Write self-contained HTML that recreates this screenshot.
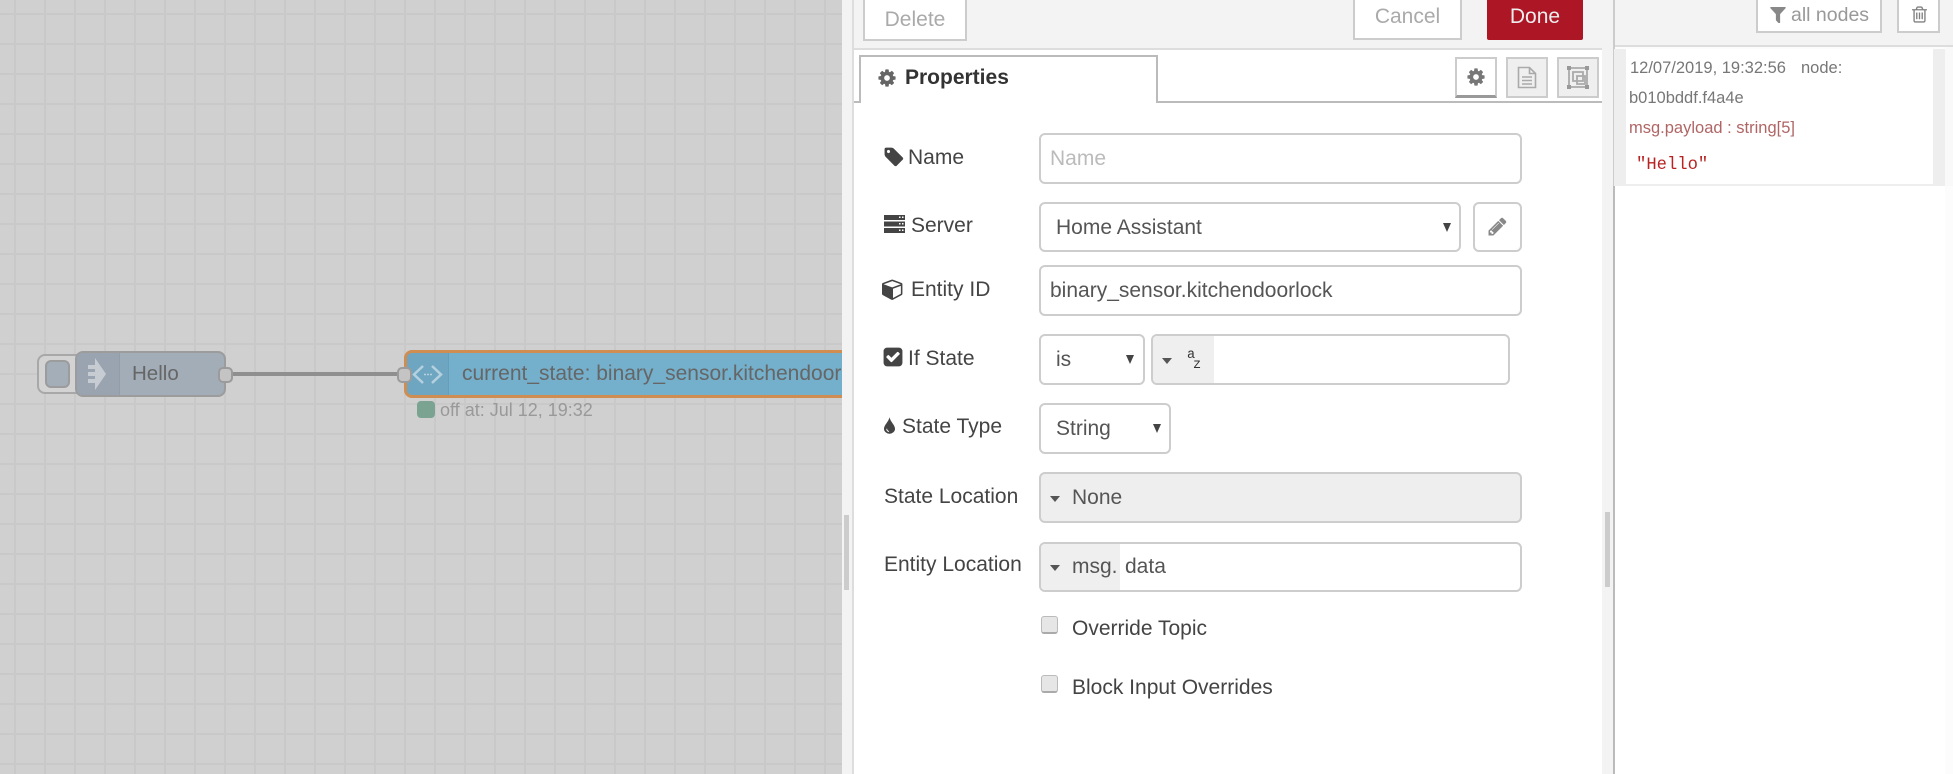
<!DOCTYPE html>
<html><head><meta charset="utf-8"><style>
*{box-sizing:border-box}
html,body{margin:0;padding:0}
body{width:1953px;height:774px;overflow:hidden;position:relative;background:#fff;font-family:"Liberation Sans",Arial,sans-serif;color:#555}
.a{position:absolute}
.t{position:absolute;white-space:nowrap;line-height:30px;height:30px}
.l{font-size:21px;color:#444}
.in{position:absolute;background:#fff;border:2px solid #cdcdcd;border-radius:6px}
.btn{position:absolute;background:#fff;border:2px solid #ccc;border-top-width:0}
svg{position:absolute;display:block}
.car{position:absolute;width:0;height:0;border-left:5.500px solid transparent;border-right:5.500px solid transparent;border-top:6px solid #555}
.sc{position:absolute;width:0;height:0;border-left:4.500px solid transparent;border-right:4.500px solid transparent;border-top:9px solid #444}
.cb{position:absolute;width:17px;height:18px;background:#e6e6e6;border:1px solid #bbb;border-bottom:2px solid #aaa;border-radius:3px}
.f{font-size:21px;color:#555}
</style></head><body>

<!-- canvas -->
<div class="a" style="left:0;top:0;width:842px;height:774px;background-color:#d0d0d0;background-image:linear-gradient(to right,#c9c9c9 2px,transparent 2px),linear-gradient(to bottom,#c9c9c9 2px,transparent 2px);background-size:30px 30px;background-position:14px 13px;overflow:hidden">
  <div class="a" style="left:37px;top:354px;width:50px;height:40px;background:#d3d3d3;border:2px solid #a8a8a8;border-radius:8px"></div>
  <div class="a" style="left:45px;top:360px;width:25px;height:28px;background:#a3aeb9;border:2px solid #9c9c9c;border-radius:6px"></div>
  <div class="a" style="left:75px;top:351px;width:151px;height:46px;background:#a2adb8;border:2px solid #9c9c9c;border-radius:8px"></div>
  <div class="a" style="left:77px;top:353px;width:43px;height:42px;background:#99a4b0;border-right:1px solid #929da9;border-radius:6px 0 0 6px"></div>
  <svg style="left:85px;top:356px" width="26" height="36" viewBox="0 0 26 36"><path d="M3 9h7V2l11 16-11 16v-7H3v-4h7v-3H3v-4h7v-3H3z" fill="#c6ccd2"/></svg>
  <div class="t" style="left:132px;top:359px;font-size:20.500px;color:#666">Hello</div>
  <div class="a" style="left:232px;top:372px;width:166px;height:4px;background:#8f8f8f"></div>
  <div class="a" style="left:218px;top:367px;width:15px;height:16px;background:#c4c4c4;border:2px solid #9b9b9b;border-radius:5px"></div>
  <div class="a" style="left:404px;top:350px;width:480px;height:48px;background:#74afcb;border:3px solid #cf8d52;border-radius:8px"></div>
  <div class="a" style="left:407px;top:353px;width:42px;height:42px;background:#6ea6c1;border-right:1px solid #689db8;border-radius:5px 0 0 5px"></div>
  <svg style="left:412px;top:360px" width="32" height="28" viewBox="0 0 32 28"><path d="M11 6L2 14.500 11 23M20 6l9 8.500L20 23" fill="none" stroke="#b5d1df" stroke-width="2.500"/><path d="M12 14.500h2M15 14.500h2M18 14.500h2" stroke="#b5d1df" stroke-width="1.500"/></svg>
  <div class="t" style="left:462px;top:359px;font-size:21px;color:#666">current_state: binary_sensor.kitchendoor</div>
  <div class="a" style="left:397px;top:367px;width:15px;height:16px;background:#c4c4c4;border:2px solid #9b9b9b;border-radius:5px"></div>
  <div class="a" style="left:417px;top:401px;width:18px;height:17px;background:#7aa392;border-radius:4px"></div>
  <div class="t" style="left:440px;top:395px;font-size:18px;color:#999">off at: Jul 12, 19:32</div>
</div>

<!-- editor tray -->
<div class="a" style="left:842px;top:0;width:771px;height:774px;background:#f3f3f3"></div>
<div class="a" style="left:844px;top:515px;width:5px;height:75px;background:#ccc"></div>
<div class="a" style="left:852px;top:0;width:2px;height:774px;background:#ddd"></div>
<div class="a" style="left:854px;top:48px;width:748px;height:726px;background:#fff;border-top:2px solid #ddd"></div>

<div class="btn" style="left:863px;top:0;width:104px;height:41px"></div>
<div class="t" style="left:863px;width:104px;text-align:center;top:5px;font-size:21px;color:#aaa">Delete</div>
<div class="btn" style="left:1353px;top:0;width:109px;height:40px"></div>
<div class="t" style="left:1353px;width:109px;text-align:center;top:2px;font-size:21px;color:#aaa">Cancel</div>
<div class="a" style="left:1487px;top:0;width:96px;height:40px;background:#ad1625;border-radius:0 0 2px 2px"></div>
<div class="t" style="left:1487px;width:96px;text-align:center;top:2px;font-size:21px;color:#eee">Done</div>

<!-- tabs -->
<div class="a" style="left:854px;top:101px;width:748px;height:2px;background:#bbb"></div>
<div class="a" style="left:859px;top:55px;width:299px;height:48px;background:#fff;border:2px solid #bbb;border-bottom:0"></div>
<svg style="left:877px;top:68px" width="20" height="20" viewBox="0 0 1792 1792"><path fill="#666" d="M1152 896q0-106-75-181t-181-75-181 75-75 181 75 181 181 75 181-75 75-181zm512-109v222q0 12-8 23t-20 13l-185 28q-19 54-39 91 35 50 107 138 10 12 10 25t-9 23q-27 37-99 108t-94 71q-12 0-26-9l-138-108q-44 23-91 38-16 136-29 186-7 28-36 28h-222q-14 0-24.500-8.500t-11.500-21.500l-28-184q-49-16-90-37l-141 107q-10 9-25 9-14 0-25-11-126-114-165-168-7-10-7-23 0-12 8-23 15-21 51-66.500t54-70.500q-27-50-41-99l-183-27q-13-2-21-12.500t-8-23.500v-222q0-12 8-23t19-13l186-28q14-46 39-92-40-57-107-138-10-12-10-24 0-10 9-23 26-36 98.500-107.500t94.500-71.500q13 0 26 10l138 107q44-23 91-38 16-136 29-186 7-28 36-28h222q14 0 24.500 8.500t11.500 21.500l28 184q49 16 90 37l142-107q9-9 24-9 13 0 25 10 129 119 165 170 7 8 7 22 0 12-8 23-15 21-51 66.500t-54 70.500q26 50 41 98l183 28q13 2 21 12.500t8 23.500z"/></svg>
<div class="t" style="left:905px;top:63px;font-size:21px;font-weight:bold;color:#333">Properties</div>

<div class="a" style="left:1455px;top:57px;width:42px;height:41px;background:#fff;border:2px solid #ccc;border-bottom:3px solid #999"></div>
<svg style="left:1466px;top:67px" width="20" height="20" viewBox="0 0 1792 1792"><path fill="#777" d="M1152 896q0-106-75-181t-181-75-181 75-75 181 75 181 181 75 181-75 75-181zm512-109v222q0 12-8 23t-20 13l-185 28q-19 54-39 91 35 50 107 138 10 12 10 25t-9 23q-27 37-99 108t-94 71q-12 0-26-9l-138-108q-44 23-91 38-16 136-29 186-7 28-36 28h-222q-14 0-24.500-8.500t-11.500-21.500l-28-184q-49-16-90-37l-141 107q-10 9-25 9-14 0-25-11-126-114-165-168-7-10-7-23 0-12 8-23 15-21 51-66.500t54-70.500q-27-50-41-99l-183-27q-13-2-21-12.500t-8-23.500v-222q0-12 8-23t19-13l186-28q14-46 39-92-40-57-107-138-10-12-10-24 0-10 9-23 26-36 98.500-107.500t94.500-71.500q13 0 26 10l138 107q44-23 91-38 16-136 29-186 7-28 36-28h222q14 0 24.500 8.500t11.500 21.500l28 184q49 16 90 37l142-107q9-9 24-9 13 0 25 10 129 119 165 170 7 8 7 22 0 12-8 23-15 21-51 66.500t-54 70.500q26 50 41 98l183 28q13 2 21 12.500t8 23.500z"/></svg>
<div class="a" style="left:1506px;top:57px;width:42px;height:41px;background:#efefef;border:2px solid #ccc"></div>
<svg style="left:1517px;top:66px" width="20" height="23" viewBox="0 0 20 23"><path d="M1.500 1.500h11l6 6v14h-17zM12.500 1.500v6h6M5 11h10M5 14.500h10M5 18h10" fill="none" stroke="#aaa" stroke-width="1.600"/></svg>
<div class="a" style="left:1557px;top:57px;width:42px;height:41px;background:#efefef;border:2px solid #ccc"></div>
<svg style="left:1567px;top:66px" width="22" height="23" viewBox="0 0 22 23"><path d="M2 2h18v19H2zM6 6h10v9H6zM10 10h8v8h-8z" fill="none" stroke="#aaa" stroke-width="1.800"/><path d="M0 0h4v4H0zM18 0h4v4h-4zM0 19h4v4H0zM18 19h4v4h-4z" fill="#999"/></svg>

<!-- form -->
<svg style="left:883px;top:146px" width="22" height="22" viewBox="0 0 1792 1792"><path fill="#444" d="M576 448q0-53-37.500-90.500t-90.500-37.500-90.500 37.500-37.500 90.500 37.500 90.500 90.500 37.500 90.500-37.500 37.500-90.500zm1067 576q0 53-37 90l-491 492q-39 37-91 37-53 0-90-37l-715-716q-38-37-64.500-101t-26.500-117v-416q0-52 38-90t90-38h416q53 0 117 26.500t102 64.500l715 714q37 39 37 91z"/></svg>
<div class="t l" style="left:908px;top:143px">Name</div>
<div class="in" style="left:1039px;top:133px;width:483px;height:51px"></div>
<div class="t" style="left:1050px;top:144px;font-size:21px;color:#bbb">Name</div>

<svg style="left:884px;top:215px" width="21" height="18" viewBox="0 0 21 18"><path fill="#444" d="M0 0h21v5H0zM0 6.500h21v5H0zM0 13h21v5H0z"/><path fill="#fff" d="M15 1.500h1.500V3H15zM18 1.500h1.500V3H18zM15 8h1.500v1.500H15zM18 8h1.500v1.500H18zM15 14.500h1.500V16H15zM18 14.500h1.500V16H18z"/></svg>
<div class="t l" style="left:911px;top:211px">Server</div>
<div class="in" style="left:1039px;top:202px;width:422px;height:50px"></div>
<div class="t f" style="left:1056px;top:213px">Home Assistant</div>
<div class="sc" style="left:1443px;top:223px"></div>
<div class="in" style="left:1473px;top:202px;width:49px;height:50px"></div>
<svg style="left:1487px;top:216px" width="21" height="21" viewBox="0 0 1792 1792"><path fill="#888" d="M491 1536l91-91-235-235-91 91v107h128v128h107zm523-928q0-22-22-22-10 0-17 7l-542 542q-7 7-7 17 0 22 22 22 10 0 17-7l542-542q7-7 7-17zm-54-192l416 416-832 832h-416v-416zm683 96q0 53-37 90l-166 166-416-416 166-165q36-38 90-38 53 0 91 38l235 234q37 39 37 91z"/></svg>

<svg style="left:882px;top:278px" width="22" height="22" viewBox="0 0 1792 1792"><path fill="#444" d="M896 1629l640-349v-636l-640 233v752zm-64-865l698-254-698-254-698 254zm832-252v768q0 35-18 65t-49 47l-704 384q-28 16-61 16t-61-16l-704-384q-31-17-49-47t-18-65v-768q0-40 23-73t61-47l704-256q22-8 44-8t44 8l704 256q38 14 61 47t23 73z"/></svg>
<div class="t l" style="left:911px;top:275px">Entity ID</div>
<div class="in" style="left:1039px;top:265px;width:483px;height:51px"></div>
<div class="t f" style="left:1050px;top:276px">binary_sensor.kitchendoorlock</div>

<svg style="left:882px;top:346px" width="22" height="22" viewBox="0 0 1792 1792"><path fill="#444" d="M813 1299l614-614q19-19 19-45t-19-45l-102-102q-19-19-45-19t-45 19l-467 467-211-211q-19-19-45-19t-45 19l-102 102q-19 19-19 45t19 45l358 358q19 19 45 19t45-19zm851-883v960q0 119-84.500 203.500t-203.500 84.500h-960q-119 0-203.500-84.500t-84.500-203.500v-960q0-119 84.500-203.500t203.500-84.500h960q119 0 203.500 84.500t84.500 203.500z"/></svg>
<div class="t l" style="left:908px;top:344px">If State</div>
<div class="in" style="left:1039px;top:334px;width:106px;height:51px"></div>
<div class="t f" style="left:1056px;top:345px">is</div>
<div class="sc" style="left:1126px;top:355px"></div>
<div class="in" style="left:1151px;top:334px;width:359px;height:51px;overflow:hidden"><div class="a" style="left:0;top:0;width:61px;height:47px;background:#efefef"></div></div>
<div class="car" style="left:1162px;top:358px"></div>
<div class="t" style="left:1187px;top:348px;font-size:13.500px;font-family:'Liberation Mono',monospace;color:#333;line-height:16px;height:16px">a</div>
<div class="t" style="left:1193px;top:358px;font-size:13.500px;font-family:'Liberation Mono',monospace;color:#333;line-height:16px;height:16px">z</div>

<svg style="left:884px;top:417px" width="11" height="17" viewBox="0 0 12 18"><path fill="#444" d="M6 0C7 5 12 8.500 12 12.500a6 5.500 0 0 1-12 0C0 8.500 5 5 6 0z"/><path d="M3 12.500a3 3 0 0 0 2.500 3" fill="none" stroke="#fff" stroke-width="1"/></svg>
<div class="t l" style="left:902px;top:412px">State Type</div>
<div class="in" style="left:1039px;top:403px;width:132px;height:51px"></div>
<div class="t f" style="left:1056px;top:414px">String</div>
<div class="sc" style="left:1153px;top:424px"></div>

<div class="t l" style="left:884px;top:482px">State Location</div>
<div class="in" style="left:1039px;top:472px;width:483px;height:51px;background:#eee"></div>
<div class="car" style="left:1050px;top:496px"></div>
<div class="t f" style="left:1072px;top:483px">None</div>

<div class="t l" style="left:884px;top:550px">Entity Location</div>
<div class="in" style="left:1039px;top:542px;width:483px;height:50px;overflow:hidden"><div class="a" style="left:0;top:0;width:79px;height:46px;background:#efefef"></div></div>
<div class="car" style="left:1050px;top:565px"></div>
<div class="t f" style="left:1072px;top:552px">msg.</div>
<div class="t f" style="left:1125px;top:552px">data</div>

<div class="cb" style="left:1041px;top:616px"></div>
<div class="t l" style="left:1072px;top:614px">Override Topic</div>
<div class="cb" style="left:1041px;top:675px"></div>
<div class="t l" style="left:1072px;top:673px">Block Input Overrides</div>

<!-- debug sidebar -->
<div class="a" style="left:1602px;top:0;width:11px;height:774px;background:#f3f3f3"></div>
<div class="a" style="left:1605px;top:512px;width:5px;height:75px;background:#ccc"></div>
<div class="a" style="left:1613px;top:0;width:340px;height:774px;background:#fcfcfc"></div>
<div class="a" style="left:1613px;top:0;width:2px;height:186px;background:#ccc"></div>
<div class="a" style="left:1613px;top:186px;width:2px;height:588px;background:#bbb"></div>
<div class="a" style="left:1615px;top:0;width:338px;height:45px;background:#f3f3f3"></div>
<div class="a" style="left:1615px;top:45px;width:338px;height:2px;background:#ddd"></div>
<div class="a" style="left:1945px;top:47px;width:8px;height:139px;background:#f9f9f9"></div>
<div class="a" style="left:1615px;top:186px;width:330px;height:588px;background:#fff"></div>
<div class="btn" style="left:1756px;top:0;width:126px;height:33px"></div>
<svg style="left:1770px;top:7px" width="16" height="16" viewBox="170 256 1452 1345" preserveAspectRatio="none"><path fill="#888" d="M1595 295q17 41-14 70l-493 493v742q0 42-39 59-13 5-25 5-27 0-45-19l-256-256q-19-19-19-45v-486l-493-493q-31-29-14-70 17-39 59-39h1280q42 0 59 39z"/></svg>
<div class="t" style="left:1791px;top:0;font-size:19.500px;color:#999">all nodes</div>
<div class="btn" style="left:1897px;top:0;width:43px;height:33px"></div>
<svg style="left:1910px;top:5px" width="19" height="19" viewBox="0 0 1792 1792"><path fill="#808080" d="M704 736v576q0 14-9 23t-23 9h-64q-14 0-23-9t-9-23v-576q0-14 9-23t23-9h64q14 0 23 9t9 23zm256 0v576q0 14-9 23t-23 9h-64q-14 0-23-9t-9-23v-576q0-14 9-23t23-9h64q14 0 23 9t9 23zm256 0v576q0 14-9 23t-23 9h-64q-14 0-23-9t-9-23v-576q0-14 9-23t23-9h64q14 0 23 9t9 23zm128 724v-948h-896v948q0 22 7 40.500t14.500 27 10.500 8.500h832q3 0 10.500-8.500t14.500-27 7-40.500zm-672-1076h448l-48-117q-7-9-17-11h-317q-10 2-17 11zm928 32v64q0 14-9 23t-23 9h-96v948q0 83-47 143.500t-113 60.500h-832q-66 0-113-58.500t-47-141.500v-952h-96q-14 0-23-9t-9-23v-64q0-14 9-23t23-9h309l70-167q15-37 54-63t79-26h320q40 0 79 26t54 63l70 167h309q14 0 23 9t9 23z"/></svg>

<div class="a" style="left:1614px;top:49px;width:331px;height:137px;background:#eee"></div>
<div class="a" style="left:1626px;top:49px;width:307px;height:135px;background:#fff"></div>
<div class="t" style="left:1630px;top:53px;font-size:16.500px;color:#777">12/07/2019, 19:32:56</div>
<div class="t" style="left:1801px;top:53px;font-size:16.500px;color:#777">node:</div>
<div class="t" style="left:1629px;top:83px;font-size:16.500px;color:#777">b010bddf.f4a4e</div>
<div class="t" style="left:1629px;top:113px;font-size:16.500px;color:#b06565">msg.payload : string[5]</div>
<div class="t" style="left:1636px;top:151px;font-size:17.200px;font-family:'Liberation Mono',monospace;color:#b82222">"Hello"</div>

</body></html>
